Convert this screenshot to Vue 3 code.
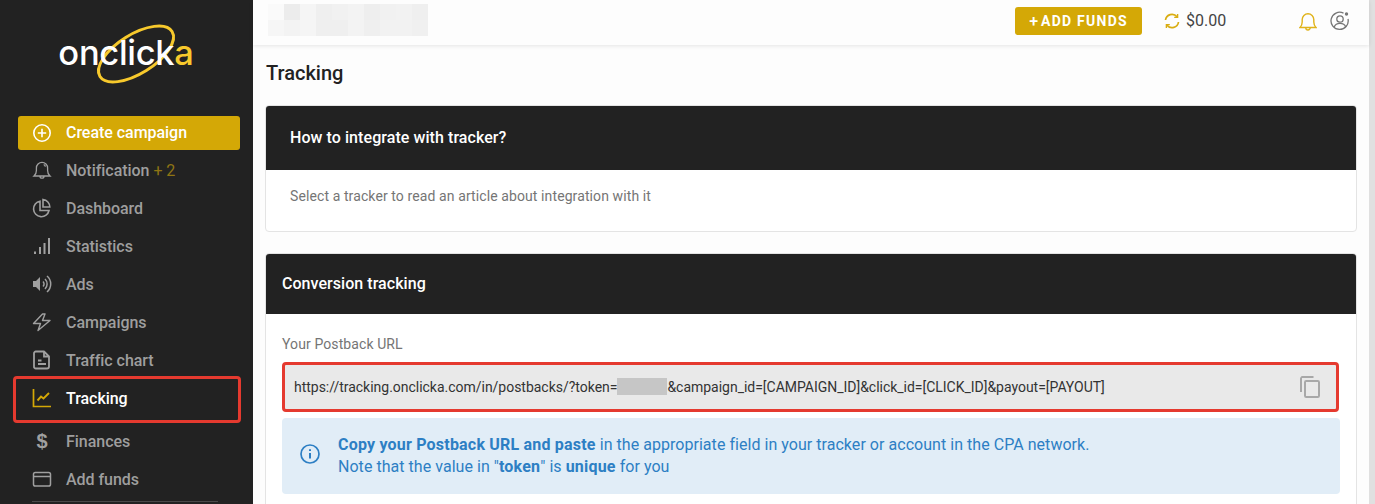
<script setup>
const mosaic = ['#fafafa','#ececec','#f5f5f5','#efefef','#f1f1f1','#f3f3f3','#eeeeee','#f1f1f1','#f2f2f2','#efefef','#f6f6f6','#f3f3f3','#f5f5f5','#efefef','#efefef','#f3f3f3','#efefef','#f2f2f2','#f2f2f2','#f0f0f0']
</script>

<template>
  <div class="page">
    <aside class="side">
      <div class="logo">
        <svg class="logo-ring" width="88" height="68" viewBox="0 0 88 68"><ellipse cx="44" cy="34" rx="42.500" ry="19.500" transform="rotate(-32 44 34)" fill="none" stroke="#f7c92c" stroke-width="3"/></svg>
        <span class="logo-text">onclick<b>a</b></span>
      </div>
      <a class="create">
        <svg class="ic" viewBox="0 0 20 20" fill="none" stroke="#fff" stroke-width="1.600"><circle cx="10" cy="10" r="8.200"/><path d="M10 5.800v8.400M5.800 10h8.400"/></svg>
        <span>Create campaign</span>
      </a>
      <nav class="menu">
        <a class="item">
          <svg class="ic" viewBox="0 0 20 20" fill="none" stroke="#a0a0a0" stroke-width="1.300"><path d="M2 16c1.700-1.500 2.400-3.200 2.400-5.600V8a5.600 5.600 0 0 1 11.200 0v2.400c0 2.400.7 4.100 2.400 5.600zM8 16.200a2 2 0 0 0 4 0"/><path d="M11.700 4.500c1 .5 1.500 1.200 1.700 2.200"/></svg>
          <span>Notification <em>+ 2</em></span>
        </a>
        <a class="item">
          <svg class="ic" viewBox="0 0 20 20" fill="none" stroke="#a0a0a0" stroke-width="1.600"><path d="M8 3.200a7.800 7.800 0 1 0 9 9.300H8z"/><path d="M11 1.500a7.500 7.500 0 0 1 6.800 7.500H11z"/></svg>
          <span>Dashboard</span>
        </a>
        <a class="item">
          <svg class="ic" viewBox="0 0 20 20" fill="#a0a0a0"><rect x="2" y="15.500" width="2" height="2.500"/><rect x="7" y="11" width="2" height="7"/><rect x="11.500" y="7" width="2" height="11"/><rect x="16" y="2" width="2" height="16"/></svg>
          <span>Statistics</span>
        </a>
        <a class="item">
          <svg class="ic" viewBox="0 0 20 20" fill="none" stroke="#a0a0a0" stroke-width="1.500"><path d="M1 7h3l4-4v14l-4-4H1z" fill="#a0a0a0" stroke="none"/><path d="M11 7.500a3.500 3.500 0 0 1 0 5M13 5a7 7 0 0 1 0 10M15 2a10.500 10.500 0 0 1 0 16"/></svg>
          <span>Ads</span>
        </a>
        <a class="item">
          <svg class="ic" viewBox="0 0 20 20" fill="none" stroke="#a0a0a0" stroke-width="1.400"><path d="M10.500 2 1.500 11.500h7L6 18.500l12-10h-7.500L13 2z" stroke-linejoin="round"/></svg>
          <span>Campaigns</span>
        </a>
        <a class="item">
          <svg class="ic" viewBox="0 0 20 20" fill="none" stroke="#a0a0a0" stroke-width="1.800"><path d="M3.800 1.500h8.200l5 5v10a2 2 0 0 1-2 2H3.800a1.800 1.800 0 0 1-1.800-2V3.300a1.800 1.800 0 0 1 1.800-1.800z" stroke-linejoin="round"/><path d="M12 1.500v5h5M6 10.500h3.500M6 14h8"/></svg>
          <span>Traffic chart</span>
        </a>
        <a class="item active">
          <svg class="ic" viewBox="0 0 20 20" fill="none" stroke="#d4a806" stroke-width="1.700"><path d="M1.500 1v17.500h17.500"/><path d="M5.500 12.500 9 8.500l2.500 2L17 5" stroke-width="1.900"/></svg>
          <span>Tracking</span>
          <i class="under"></i>
          <i class="mark"></i>
        </a>
        <a class="item gap">
          <svg class="ic" viewBox="0 0 20 20"><text x="10" y="17" text-anchor="middle" class="dollar">$</text></svg>
          <span>Finances</span>
        </a>
        <a class="item">
          <svg class="ic" viewBox="0 0 20 20" fill="none" stroke="#a0a0a0" stroke-width="1.500"><rect x="1.500" y="3.500" width="17" height="13.500" rx="1.800"/><path d="M1.500 7.500h17"/></svg>
          <span>Add funds</span>
        </a>
      </nav>
      <div class="rule"></div>
    </aside>

    <div class="main">
      <header class="top">
        <div class="mosaic"><i v-for="(c, i) in mosaic" :key="i" :style="{ background: c }"></i></div>
        <button class="funds"><span class="plus">+</span>ADD FUNDS</button>
        <div class="balance">
          <svg width="16" height="16" viewBox="0 0 16 16" fill="none" stroke="#d9ad12" stroke-width="1.700"><path d="M1.500 7A6.500 6.500 0 0 1 13 3.800"/><path d="M14.500 9A6.500 6.500 0 0 1 3 12.200"/><path d="M13.600 1v3.400h-3.400M2.400 15v-3.400h3.400" stroke-width="1.400"/></svg>
          <span>$0.00</span>
        </div>
        <svg class="bell" width="18" height="20" viewBox="0 0 18 20" fill="none" stroke="#e0b31a" stroke-width="1.400"><path d="M1 15.500c1.500-1.400 2.200-3 2.200-5.400V7.500a5.800 5.800 0 0 1 11.600 0v2.600c0 2.400.7 4 2.200 5.400z"/><path d="M6.800 15.800a2.200 2.200 0 0 0 4.400 0"/></svg>
        <svg class="user" width="20" height="20" viewBox="0 0 20 20" fill="none" stroke="#757575" stroke-width="1.300"><path d="M13.500 2.200A8.600 8.600 0 1 0 18 8"/><circle cx="10" cy="8" r="3.200"/><path d="M4.200 16c1-2.600 3-3.600 5.800-3.600s4.800 1 5.800 3.600"/><circle cx="16.500" cy="3" r="1.700" fill="#757575" stroke="none"/></svg>
      </header>

      <div class="content">
        <h1>Tracking</h1>
        <section class="card first">
          <div class="head h1">How to integrate with tracker?</div>
          <p class="hint">Select a tracker to read an article about integration with it</p>
        </section>
        <section class="card">
          <div class="head h2">Conversion tracking</div>
          <div class="body">
            <label>Your Postback URL</label>
            <div class="url">
              <span class="link">https://tracking.onclicka.com/in/postbacks/?token=<i class="blur"></i>&amp;campaign_id=[CAMPAIGN_ID]&amp;click_id=[CLICK_ID]&amp;payout=[PAYOUT]</span>
              <svg class="copy" width="22" height="24" viewBox="0 0 22 24" fill="none" stroke="#a8a8a8" stroke-width="2"><path d="M14.500 2H3a2 2 0 0 0-1 1.500V17"/><rect x="6" y="6" width="14" height="16" rx="1.200"/></svg>
            </div>
            <div class="note">
              <svg class="info" width="20" height="20" viewBox="0 0 20 20" fill="none" stroke="#2d7fc4" stroke-width="1.700"><circle cx="10" cy="10" r="9"/><path d="M10 9v5.500" stroke-width="2"/><path d="M10 5.200v1.800" stroke-width="2"/></svg>
              <div>
                <b>Copy your Postback URL and paste</b> in the appropriate field in your tracker or account in the CPA network.<br>
                Note that the value in "<b>token</b>" is <b>unique</b> for you
              </div>
            </div>
          </div>
        </section>
      </div>
    </div>
    <div class="scroll"></div>
  </div>
</template>

<style>
html, body { margin: 0; overflow: hidden; }
</style>

<style scoped>
.page { display: flex; width: 1375px; height: 504px; overflow: hidden; font-family: Roboto, sans-serif; background: #fdfdfd; }
.side { flex: 0 0 253px; background: #222; box-sizing: border-box; padding: 0 13px 0 18px; }
.logo { position: relative; height: 116px; display: flex; justify-content: center; padding: 32px 6px 0 0; box-sizing: border-box; }
.logo-text { position: relative; font-family: Inter, sans-serif; font-size: 34.500px; line-height: 42px; letter-spacing: -.3px; color: #fff; font-weight: 500; height: 42px; }
.logo-text b { color: #f7c92c; font-weight: 500; }
.logo-ring { position: absolute; left: 74px; top: 20px; overflow: visible; }
.create { display: flex; align-items: center; height: 34px; width: 222px; background: #d4a806; border-radius: 3px; color: #fff; font-size: 16px; font-weight: 500; letter-spacing: -.04px; padding: 0 0 1px 14px; box-sizing: border-box; }
.ic { width: 20px; height: 20px; flex: none; margin-right: 14px; }
.menu { display: flex; flex-direction: column; margin-top: 1px; }
.item { position: relative; display: flex; align-items: center; height: 38px; padding-left: 14px; color: #9e9e9e; font-size: 16px; font-weight: 500; letter-spacing: -.04px; }
.item em { font-style: normal; font-weight: 400; color: #8f7514; }
.active { color: #fff; }
.gap { margin-top: 5px; }
.mark { position: absolute; left: -5px; top: -3px; width: 222px; height: 41px; border: 3px solid #e53a2f; border-radius: 4px; }
.under { position: absolute; left: 14px; right: 22px; top: 41px; height: 1px; background: #4a4a4a; }
.dollar { font-family: "Liberation Sans", sans-serif; font-weight: 700; font-size: 20px; fill: #a0a0a0; }
.rule { height: 1px; background: #4a4a4a; margin: 3px 22px 0 14px; }
.main { flex: 1; min-width: 0; display: flex; flex-direction: column; }
.top { height: 45px; flex: none; display: flex; align-items: center; background: #fdfdfd; box-shadow: 0 1px 4px rgba(0,0,0,.1); padding-left: 15px; position: relative; box-sizing: border-box; }
.mosaic { display: grid; grid-template-columns: repeat(10, 16px); grid-auto-rows: 16px; margin-top: -5px; margin-right: 587px; }
.funds { width: 127px; height: 28px; margin-top: -3px; background: #d4a806; color: #fff; border: 0; border-radius: 3px; font-family: Roboto, sans-serif; font-size: 14px; font-weight: 700; letter-spacing: 1.250px; padding: 0; display: flex; align-items: center; justify-content: center; }
.plus { font-size: 16px; font-weight: 500; margin-right: 3px; letter-spacing: 0; }
.balance { display: flex; align-items: center; gap: 6px; margin-left: 22px; margin-top: -4px; font-size: 16px; color: #444; width: 134px; }
.bell { margin-top: -1px; margin-left: 1px; }
.user { margin-left: 13px; margin-top: -3px; }
.content { padding: 0 12px 0 12px; }
h1 { font-size: 20px; line-height: 24px; font-weight: 500; margin: 16px 0 20px 1px; color: #222; }
.card { border: 1px solid #e4e4e4; border-radius: 4px; background: #fff; overflow: hidden; }
.first { margin-bottom: 21px; height: 127px; box-sizing: border-box; }
.head { background: #222; color: #fff; font-size: 16px; font-weight: 500; display: flex; align-items: center; box-sizing: border-box; }
.h1 { height: 64px; padding: 0 0 1px 24px; letter-spacing: .07px; }
.h2 { height: 60px; padding: 0 0 2px 16px; letter-spacing: .05px; }
.hint { margin: 18px 0 0 24px; font-size: 14px; line-height: 16px; color: #757575; letter-spacing: .1px; }
.body { padding: 22px 16px 28px; }
label { display: block; font-size: 14px; line-height: 16px; color: #757575; letter-spacing: .1px; }
.url { margin: 10px 1px 0 0; height: 50px; box-sizing: border-box; border: 3px solid #e53a2f; border-radius: 4px; background: #e9e9e9; display: flex; align-items: center; justify-content: space-between; padding: 0 15px 1px 9px; }
.link { font-size: 14px; color: #333; white-space: nowrap; letter-spacing: -.02px; }
.blur { display: inline-block; width: 50px; height: 17px; background: #c6c6c6; vertical-align: -3px; }
.copy { margin-top: 0; }
.note { margin-top: 6px; background: #e1edf7; border-radius: 4px; padding: 13px 18px 14px; display: flex; gap: 18px; align-items: center; color: #2d7fc4; font-size: 16px; line-height: 22px; letter-spacing: .04px; height: 76px; box-sizing: border-box; }
.note b { letter-spacing: .2px; }
.info { margin-bottom: 4px; flex: none; }
.scroll { flex: 0 0 6px; background: #e0e0e0; }
</style>
